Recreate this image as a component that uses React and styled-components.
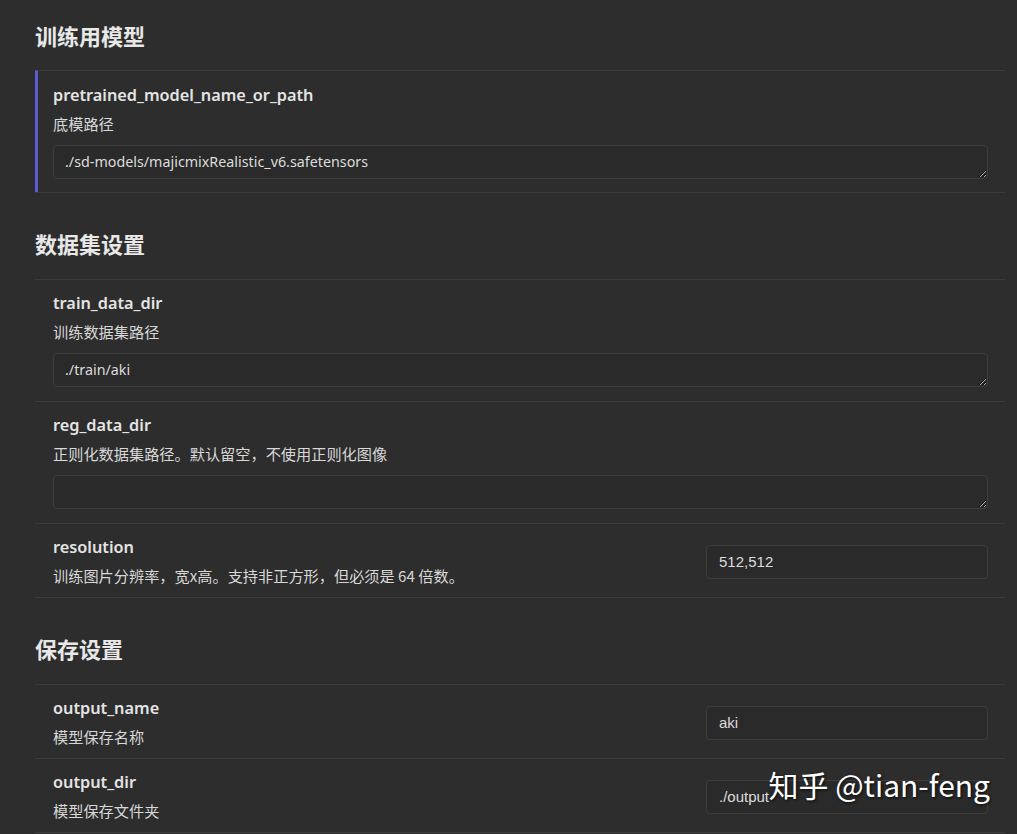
import React from 'react'
import styled, { createGlobalStyle } from 'styled-components'

const sections = [
  {
    title: '训练用模型',
    items: [
      {
        name: 'pretrained_model_name_or_path',
        desc: '底模路径',
        value: './sd-models/majicmixRealistic_v6.safetensors',
        kind: 'textarea',
        changed: true,
      },
    ],
  },
  {
    title: '数据集设置',
    items: [
      { name: 'train_data_dir', desc: '训练数据集路径', value: './train/aki', kind: 'textarea' },
      { name: 'reg_data_dir', desc: '正则化数据集路径。默认留空，不使用正则化图像', value: '', kind: 'textarea' },
      { name: 'resolution', desc: '训练图片分辨率，宽x高。支持非正方形，但必须是 64 倍数。', value: '512,512', kind: 'input' },
    ],
  },
  {
    title: '保存设置',
    items: [
      { name: 'output_name', desc: '模型保存名称', value: 'aki', kind: 'input' },
      { name: 'output_dir', desc: '模型保存文件夹', value: './output', kind: 'input' },
    ],
  },
]

function App() {
  return (
    <Page>
      <GlobalStyle />
      {sections.map((section) => (
        <Section key={section.title}>
          <Heading>{section.title}</Heading>
          {section.items.map((item) => (
            <Item key={item.name} $changed={item.changed} $inline={item.kind === 'input'}>
              <Label>
                <Name>{item.name}</Name>
                <Desc>{item.desc}</Desc>
              </Label>
              {item.kind === 'textarea' ? (
                <TextArea rows={1} defaultValue={item.value} />
              ) : (
                <Input defaultValue={item.value} />
              )}
            </Item>
          ))}
        </Section>
      ))}
      <Watermark>知乎 @tian-feng</Watermark>
    </Page>
  )
}

const GlobalStyle = createGlobalStyle`
  html, body {
    margin: 0;
    background: #2d2d2d;
    overflow: hidden;
  }
`

const Page = styled.main`
  position: relative;
  box-sizing: border-box;
  width: 1017px;
  height: 834px;
  padding: 0 12px 0 35px;
  background: #2d2d2d;
  color: #e6e6e6;
  font-family: 'Noto Sans', 'Noto Sans CJK SC', sans-serif;
  overflow: hidden;
`

const Section = styled.section`
  display: flex;
  flex-direction: column;
  border-bottom: 1px solid #3b3b3b;
`

const Heading = styled.h2`
  margin: 33px 0 19px;
  height: 34px;
  line-height: 34px;
  font-size: 22px;
  font-weight: 700;
  color: #e8e8e8;
  font-family: 'Noto Sans CJK SC', sans-serif;

  ${Section}:first-child & {
    margin: 18px 0 18px;
  }
`

const Item = styled.div`
  display: grid;
  grid-template-columns: ${(p) => (p.$inline ? '1fr 282px' : '1fr')};
  align-items: center;
  row-gap: 9px;
  padding: ${(p) => (p.$changed ? '12px' : '11px')} 17px
    ${(p) => (p.$inline ? '9px' : p.$changed ? '13px' : '14px')}
    ${(p) => (p.$changed ? '15px' : '18px')};
  border-top: 1px solid #3b3b3b;
  border-left: ${(p) => (p.$changed ? '3px solid #5c5cd6' : 'none')};
`

const Label = styled.div`
  display: flex;
  flex-direction: column;
`

const Name = styled.div`
  font-size: 16.3px;
  line-height: 24px;
  font-weight: 600;
  color: #e4e4e4;
`

const Desc = styled.div`
  margin-top: 3px;
  font-size: 15.2px;
  line-height: 26px;
  color: #d8d8d8;
  font-family: 'Noto Sans CJK SC', sans-serif;
`

const fieldBase = `
  box-sizing: border-box;
  height: 34px;
  width: 100%;
  margin: 0;
  background: #2a2a2a;
  border: 1px solid #3d3d3d;
  border-radius: 4px;
  color: #dcdcdc;
  outline: none;
`

const TextArea = styled.textarea`
  ${fieldBase}
  display: block;
  padding: 6px 11px;
  line-height: 20px;
  font-size: 14.3px;
  font-family: 'Noto Sans', sans-serif;
  resize: vertical;
`

const Input = styled.input`
  ${fieldBase}
  padding: 0 12px;
  font-size: 15px;
  font-family: 'Liberation Sans', Arial, sans-serif;
`

const Watermark = styled.div`
  position: absolute;
  right: 27px;
  bottom: 28px;
  font-size: 30px;
  color: #ffffff;
  font-family: 'Noto Sans CJK SC', sans-serif;
  text-shadow: 1px 1px 3px rgba(0, 0, 0, 0.8);
  pointer-events: none;
`

export default App
